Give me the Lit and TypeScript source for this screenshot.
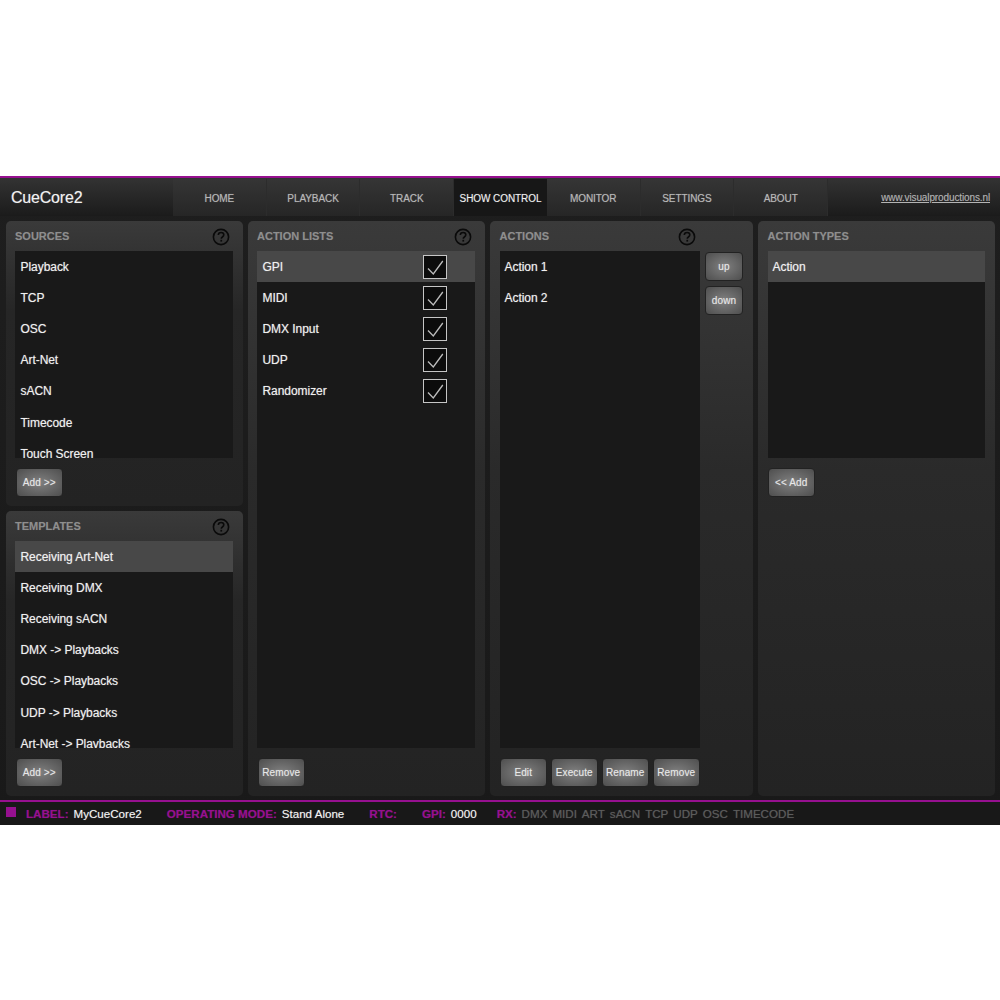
import { LitElement, html, css, svg } from "lit";
import { customElement } from "lit/decorators.js";

const help = html`<svg class="help" viewBox="0 0 18 18" width="18" height="18">
  <circle cx="9" cy="9" r="7.6" fill="none" stroke="#0a0a0a" stroke-width="1.6"/>
  <path d="M6.3 7.1c0-1.7 1.2-2.6 2.8-2.6s2.7.9 2.7 2.3c0 1.1-.6 1.6-1.4 2.2-.7.5-1.1.9-1.1 1.8" fill="none" stroke="#0a0a0a" stroke-width="1.6"/>
  <rect x="8.4" y="11.8" width="1.7" height="1.8" fill="#0a0a0a"/>
</svg>`;

const check = svg`<path d="M4 12.5 L9.3 18 L18.8 5" fill="none" stroke="#bcbcbc" stroke-width="1.3"/>`;

@customElement("app-root")
export class AppRoot extends LitElement {
  static styles = css`
    :host { display: block; width: 1000px; height: 1000px; background: #fff; padding-top: 176px; box-sizing: border-box;
      font-family: "Liberation Sans", Arial, sans-serif; }
    * { box-sizing: border-box; }
    .app { width: 1000px; border-top: 2px solid #96108f; background: linear-gradient(#1e1e1e, #191919); }
    .head { height: 38px; display: flex; align-items: stretch; background: linear-gradient(#333, #1b1b1b); padding-top: 1px; }
    .logo { width: 173px; padding: 10px 0 0 11px; color: #f2f2f2; font-size: 16px; letter-spacing: -0.2px; text-shadow: 0 0 1px rgba(255,255,255,.4); }
    .tabs { display: flex; width: 655px; }
    .tab { flex: 1; display: flex; align-items: center; justify-content: center; padding-top: 1px; font-size: 10px; letter-spacing: -0.08px; color: #b8b8b8;
      background: linear-gradient(#353535, #262626); border-right: 1px solid #2c2c2c; text-shadow: 0 0 1px rgba(255,255,255,.35); white-space: nowrap; }
    .tab.on { background: #171717; color: #f0f0f0; border-right: 0; }
    .url { flex: 1; text-align: right; padding: 13px 10px 0 0; font-size: 10px; letter-spacing: -0.12px; color: #b4b4b4; text-decoration: underline; white-space: nowrap; text-shadow: 0 0 1px rgba(255,255,255,.2); }
    .body { height: 584px; display: flex; gap: 5px; padding: 5px 5px 4px 6px; }
    .col { width: 237px; display: flex; flex-direction: column; gap: 5px; }
    .col.wide { width: 263px; }
    .panel { flex: 1; position: relative; border-radius: 5px; background: linear-gradient(#3a3a3a, #262626 90px, #232323); padding: 0 9px; display: flex; flex-direction: column; min-height: 0; }
    .panel.tall { background: linear-gradient(#3a3a3a, #2a2a2a 250px, #232323); }
    .panel.inset { padding: 0 0 0 10px; }
    .title { height: 30px; flex: none; padding-top: 9px; font-size: 11px; font-weight: 700; color: #8e8e8e; line-height: 12px; text-shadow: 0 0 1px rgba(255,255,255,.15); }
    .inset .title { margin-left: -0.5px; }
    .help { position: absolute; top: 7px; left: 206px; }
    .wide .help { left: 188px; }
    .list { background: #191919; overflow: hidden; flex: none; width: 218px; }
    .inset .list { width: 217px; }
    .list.h1 { height: 207px; }
    .list.h2 { height: 497px; }
    .inset .list.narrow { width: 200px; }
    .row { height: 31.2px; display: flex; align-items: center; justify-content: space-between; padding: 0 5px 0 5.5px; font-size: 12px; letter-spacing: -0.05px; color: #f0f0f0;
      text-shadow: 0 0 1px rgba(255,255,255,.5); }
    .inset .row { padding-left: 4.5px; }
    .row.on { background: #484848; }
    .chk { width: 24px; height: 24px; border: 1px solid #c6c6c6; background: #0c0c0c; margin-right: 23px; display: block; }
    .btns { display: flex; gap: 4.5px; padding: 10px 0 0 1px; }
    .inset .btns { padding-left: 0; }
    .btn { width: 46.5px; height: 29px; flex: none; border-radius: 4px; border: 1px solid #222; font-size: 10px; letter-spacing: .12px; color: #e8e8e8; display: flex; align-items: center; justify-content: center;
      background: radial-gradient(ellipse at center, #808080, #4e4e4e); white-space: nowrap; text-shadow: 0 0 1px rgba(255,255,255,.35); }
    .cols { display: flex; gap: 5px; }
    .side { display: flex; flex-direction: column; gap: 5px; padding-top: 1px; }
    .side .btn { width: 38px; }
    .status { border-top: 2px solid #96108f; height: 25px; background: #181818; display: flex; align-items: center; gap: 25px; font-size: 11.6px; padding-left: 6px; white-space: nowrap; }
    .sq { width: 10px; height: 10px; background: #96108f; margin-top: -3px; margin-right: -15px; flex: none; }
    .grp { display: flex; gap: 5px; }
    .grp.rx { margin-left: -5px; }
    .k { color: #96108f; font-weight: 700; text-shadow: 0 0 1px rgba(150,16,143,.5); }
    .v { color: #f4f4f4; text-shadow: 0 0 1px rgba(255,255,255,.4); }
    .d { color: #5c5c5c; text-shadow: 0 0 1px rgba(255,255,255,.2); }
  `;

  list(rows: string[], sel: number, cls: string) {
    return html`<div class="list ${cls}">${rows.map((r, i) => html`<div class="row ${i === sel ? "on" : ""}">${r}</div>`)}</div>`;
  }

  render() {
    const tabs = ["HOME", "PLAYBACK", "TRACK", "SHOW CONTROL", "MONITOR", "SETTINGS", "ABOUT"];
    const lists = ["GPI", "MIDI", "DMX Input", "UDP", "Randomizer"];
    return html`<div class="app">
      <div class="head">
        <div class="logo">CueCore2</div>
        <div class="tabs">${tabs.map((t) => html`<div class="tab ${t === "SHOW CONTROL" ? "on" : ""}">${t}</div>`)}</div>
        <div class="url">www.visualproductions.nl</div>
      </div>
      <div class="body">
        <div class="col">
          <div class="panel">
            <div class="title">SOURCES</div>${help}
            ${this.list(["Playback", "TCP", "OSC", "Art-Net", "sACN", "Timecode", "Touch Screen"], -1, "h1")}
            <div class="btns"><div class="btn">Add &gt;&gt;</div></div>
          </div>
          <div class="panel">
            <div class="title">TEMPLATES</div>${help}
            ${this.list(["Receiving Art-Net", "Receiving DMX", "Receiving sACN", "DMX -> Playbacks", "OSC -> Playbacks", "UDP -> Playbacks", "Art-Net -> Playbacks"], 0, "h1")}
            <div class="btns"><div class="btn">Add &gt;&gt;</div></div>
          </div>
        </div>
        <div class="col">
          <div class="panel tall">
            <div class="title">ACTION LISTS</div>${help}
            <div class="list h2">
              ${lists.map((r, i) => html`<div class="row ${i === 0 ? "on" : ""}">${r}<svg class="chk" viewBox="0 0 22 22">${check}</svg></div>`)}
            </div>
            <div class="btns"><div class="btn">Remove</div></div>
          </div>
        </div>
        <div class="col wide">
          <div class="panel tall inset">
            <div class="title">ACTIONS</div>${help}
            <div class="cols">
              ${this.list(["Action 1", "Action 2"], -1, "h2 narrow")}
              <div class="side"><div class="btn">up</div><div class="btn">down</div></div>
            </div>
            <div class="btns"><div class="btn">Edit</div><div class="btn">Execute</div><div class="btn">Rename</div><div class="btn">Remove</div></div>
          </div>
        </div>
        <div class="col">
          <div class="panel tall inset">
            <div class="title">ACTION TYPES</div>
            ${this.list(["Action"], 0, "h1")}
            <div class="btns"><div class="btn">&lt;&lt; Add</div></div>
          </div>
        </div>
      </div>
      <div class="status">
        <div class="sq"></div>
        <div class="grp"><span class="k">LABEL:</span><span class="v">MyCueCore2</span></div>
        <div class="grp"><span class="k">OPERATING MODE:</span><span class="v">Stand Alone</span></div>
        <div class="grp"><span class="k">RTC:</span></div>
        <div class="grp"><span class="k">GPI:</span><span class="v">0000</span></div>
        <div class="grp rx"><span class="k">RX:</span>${["DMX", "MIDI", "ART", "sACN", "TCP", "UDP", "OSC", "TIMECODE"].map((x) => html`<span class="d">${x}</span>`)}</div>
      </div>
    </div>`;
  }
}
